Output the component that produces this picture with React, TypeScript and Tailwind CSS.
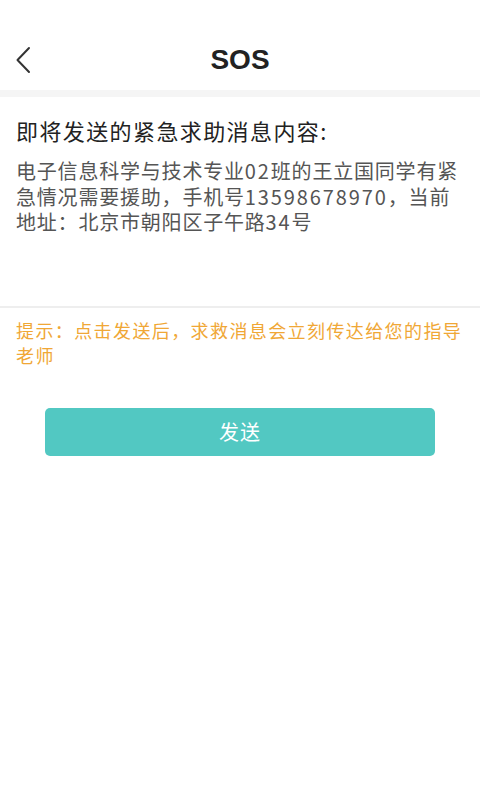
import React from "react";

const cjk = '"Noto Sans CJK SC", "Noto Sans", sans-serif';

export default function App() {
  return (
    <div className="w-[480px] h-[800px] bg-white flex flex-col" style={{ fontFamily: cjk }}>
      {/* Header */}
      <div className="h-[90px] pt-[30px] flex">
        <div className="relative flex-1 flex items-center justify-center">
          <button className="absolute left-[12px] top-[14px] w-[22px] h-[32px] flex items-center justify-center">
            <svg width="18" height="28" viewBox="0 0 18 28" fill="none">
              <path d="M15 2 L3.5 14 L15 26" stroke="#333" strokeWidth="2" strokeLinecap="round" strokeLinejoin="round" />
            </svg>
          </button>
          <h1
            className="text-[28px] leading-[32px] font-bold text-[#222]"
            style={{ fontFamily: '"Liberation Sans", Arial, sans-serif' }}
          >
            SOS
          </h1>
        </div>
      </div>
      <div className="h-[7px] bg-[#f5f5f5]" />

      {/* Content */}
      <div className="h-[209px] pl-[16px] pr-[14px] pt-[18px] flex flex-col">
        <div className="text-[22px] leading-[30px] tracking-[1.4px] text-[#222]">
          即将发送的紧急求助消息内容:
        </div>
        <div className="mt-[13px] text-[20px] leading-[25.5px] tracking-[0.8px] text-[#555]">
          电子信息科学与技术专业<span className="tracking-[1.9px]">02</span>班的王立国同学有紧急情况需要援助，手机号
          <span className="tracking-[1.9px]">13598678970</span>，当前地址：北京市朝阳区子午路
          <span className="tracking-[1.9px]">34</span>号
        </div>
      </div>
      <div className="h-[2px] bg-[#eeeeee]" />

      {/* Tip */}
      <div className="px-[16px] pt-[10px] text-[18px] leading-[25px] tracking-[1.4px] text-[#f0a736]">
        提示：点击发送后，求救消息会立刻传达给您的指导老师
      </div>

      {/* Button */}
      <div className="flex justify-center mt-[40px]">
        <button className="w-[390px] h-[48px] rounded-[5px] bg-[#52c8c2] text-white text-[20px] tracking-[1px] flex items-center justify-center">
          发送
        </button>
      </div>
    </div>
  );
}
